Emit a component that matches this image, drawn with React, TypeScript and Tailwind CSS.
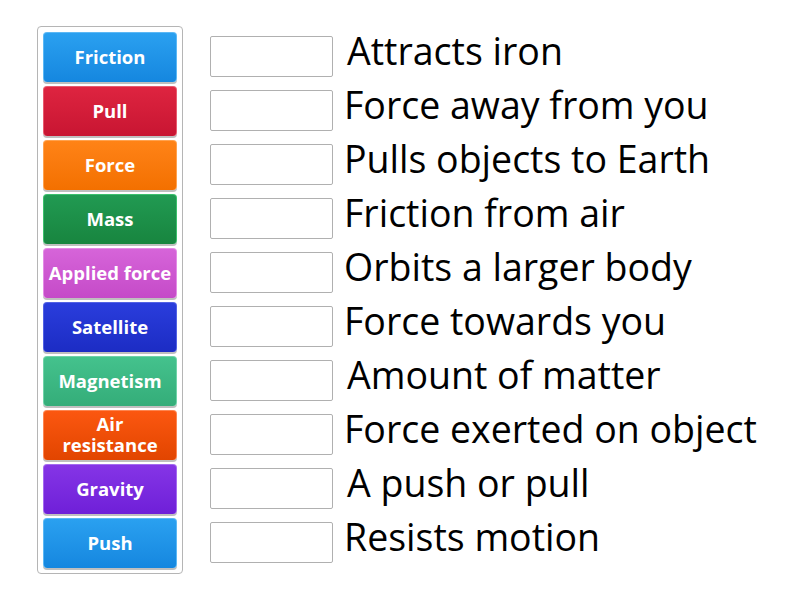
import React from 'react';

type Tile = { label: React.ReactNode; cls: string };

const tiles: Tile[] = [
  { label: 'Friction', cls: 'from-[#2aa0f0] to-[#1587df] border-[#5bb8f5]' },
  { label: 'Pull', cls: 'from-[#de2440] to-[#c81532] border-[#e85a6e]' },
  { label: 'Force', cls: 'from-[#ff8316] to-[#f37000] border-[#ffa24e]' },
  { label: 'Mass', cls: 'from-[#219a52] to-[#18853f] border-[#3cc06c]' },
  { label: 'Applied force', cls: 'from-[#d664d9] to-[#c54ac8] border-[#e38ce5]' },
  { label: 'Satellite', cls: 'from-[#2a3ddc] to-[#1c2cc4] border-[#5262e4]' },
  { label: 'Magnetism', cls: 'from-[#44c28d] to-[#34ad79] border-[#6fd3a8]' },
  {
    label: (
      <>
        Air
        <br />
        resistance
      </>
    ),
    cls: 'from-[#fb5710] to-[#e24500] border-[#fd8550]',
  },
  { label: 'Gravity', cls: 'from-[#8534e6] to-[#6f1fd8] border-[#a46aef]' },
  { label: 'Push', cls: 'from-[#2aa0f0] to-[#1587df] border-[#5bb8f5]' },
];

// clue text; the "A..." lines sit a few pixels further right in the original
const clues = [
  { text: 'Attracts iron', ml: 'ml-[14px]' },
  { text: 'Force away from you', ml: 'ml-[11px]' },
  { text: 'Pulls objects to Earth', ml: 'ml-[11px]' },
  { text: 'Friction from air', ml: 'ml-[11px]' },
  { text: 'Orbits a larger body', ml: 'ml-[11px]' },
  { text: 'Force towards you', ml: 'ml-[11px]' },
  { text: 'Amount of matter', ml: 'ml-[14px]' },
  { text: 'Force exerted on object', ml: 'ml-[11px]' },
  { text: 'A push or pull', ml: 'ml-[14px]' },
  { text: 'Resists motion', ml: 'ml-[11px]' },
];

const App: React.FC = () => {
  return (
    <div className="w-[800px] h-[600px] bg-white font-['Open_Sans',sans-serif] flex items-start pt-[26px] pl-[37px]">
      <div className="w-[146px] border border-[#b5b5b5] rounded-[4px] px-[5px] py-[5px] flex flex-col gap-[4px]">
        {tiles.map((t, i) => (
          <div
            key={i}
            className={`h-[50px] rounded-[4px] border border-b-0 bg-gradient-to-b ${t.cls} shadow-[0_2px_0_rgba(0,0,0,0.25)] flex items-center justify-center text-center text-white font-bold text-[18.5px] leading-[21px] pb-[3px]`}
          >
            <span>{t.label}</span>
          </div>
        ))}
      </div>
      <div className="ml-[27px] pt-[10px] flex flex-col gap-[13px]">
        {clues.map((c) => (
          <div key={c.text} className="h-[41px] flex items-center">
            <div className="w-[123px] h-[41px] border border-[#b0b0b0] rounded-[2px] bg-white shrink-0" />
            <span className={`${c.ml} mb-[12px] text-[37.5px] leading-none text-black whitespace-nowrap`}>{c.text}</span>
          </div>
        ))}
      </div>
    </div>
  );
};

export default App;
